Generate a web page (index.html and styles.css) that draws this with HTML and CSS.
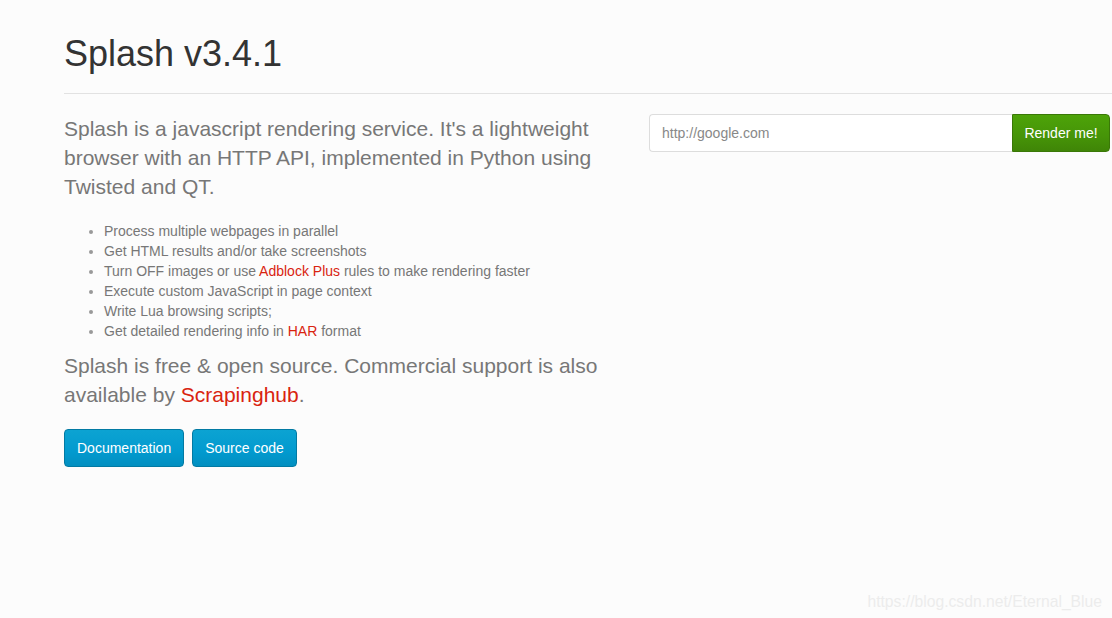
FILE: index.html
```html
<!DOCTYPE html>
<html>
<head>
<meta charset="utf-8">
<link rel="stylesheet" href="styles.css">
</head>
<body>
<div class="container">
  <div class="page-header">
    <h1>Splash v3.4.1</h1>
  </div>
  <div class="row">
    <div class="col-left">
      <p class="lead">Splash is a javascript rendering service. It's a lightweight browser with an HTTP API, implemented in Python using Twisted and QT.</p>
      <ul class="features">
        <li>Process multiple webpages in parallel</li>
        <li>Get HTML results and/or take screenshots</li>
        <li>Turn OFF images or use <a href="#">Adblock Plus</a> rules to make rendering faster</li>
        <li>Execute custom JavaScript in page context</li>
        <li>Write Lua browsing scripts;</li>
        <li>Get detailed rendering info in <a href="#">HAR</a> format</li>
      </ul>
      <p class="lead">Splash is free &amp; open source. Commercial support is also available by <a href="#">Scrapinghub</a>.</p>
      <div class="actions">
        <a class="btn btn-info" href="#">Documentation</a>
        <a class="btn btn-info" href="#">Source code</a>
      </div>
    </div>
    <div class="col-right">
      <form class="input-group">
        <input class="url-input" type="text" placeholder="http://google.com">
        <button class="btn btn-success" type="button">Render me!</button>
      </form>
    </div>
  </div>
</div>
<div class="watermark">https://blog.csdn.net/Eternal_Blue</div>
</body>
</html>
```

FILE: styles.css
```css
html, body {
  margin: 0;
  padding: 0;
}
body {
  background: #fcfcfc;
  color: #777777;
  font-family: "Liberation Sans", Arial, sans-serif;
  font-size: 14px;
  line-height: 20px;
  overflow: hidden;
  height: 618px;
}
a {
  color: #d9230f;
  text-decoration: none;
}
.container {
  padding-left: 64px;
}
.page-header {
  padding-top: 34px;
  padding-bottom: 19px;
  border-bottom: 1px solid #e2e2e2;
  margin-bottom: 20px;
}
.page-header h1 {
  margin: 0;
  font-size: 36px;
  line-height: 40px;
  font-weight: normal;
  color: #333333;
}
.row {
  display: flex;
  gap: 30px;
}
.col-left {
  width: 555px;
  flex: none;
}
.col-right {
  width: 461px;
  flex: none;
}
.lead {
  font-size: 21px;
  line-height: 29px;
  margin: 0 0 20px;
  color: #777777;
}
.features {
  margin: 0 0 10px;
  padding-left: 40px;
  list-style: disc;
}
.features li::marker {
  color: #999999;
}
.actions {
  display: flex;
  gap: 8px;
}
.btn {
  display: inline-block;
  box-sizing: border-box;
  height: 38px;
  padding: 8px 12px;
  font-family: "Liberation Sans", Arial, sans-serif;
  font-size: 14px;
  line-height: 20px;
  border-radius: 4px;
  color: #ffffff;
  text-align: center;
  white-space: nowrap;
  cursor: pointer;
}
.btn-info {
  background: linear-gradient(#0ca3d2, #029acf 60%, #028fc0);
  border: 1px solid #027aa3;
}
.input-group {
  display: flex;
  margin: 0;
}
.url-input {
  flex: 1;
  box-sizing: border-box;
  height: 38px;
  padding: 8px 12px;
  font-family: "Liberation Sans", Arial, sans-serif;
  font-size: 14px;
  line-height: 20px;
  color: #666;
  background: #ffffff;
  border: 1px solid #dddddd;
  border-right: none;
  border-radius: 4px 0 0 4px;
  outline: none;
}
.url-input::placeholder {
  color: #888888;
}
.btn-success {
  width: 98px;
  padding: 8px 0;
  background: linear-gradient(#4da309, #469408 60%, #3f8507);
  border: 1px solid #3a7807;
  border-radius: 0 4px 4px 0;
}
.watermark {
  position: absolute;
  right: 10px;
  bottom: 6px;
  font-family: "Liberation Sans", Arial, sans-serif;
  font-size: 15.7px;
  color: #ececec;
}
```
